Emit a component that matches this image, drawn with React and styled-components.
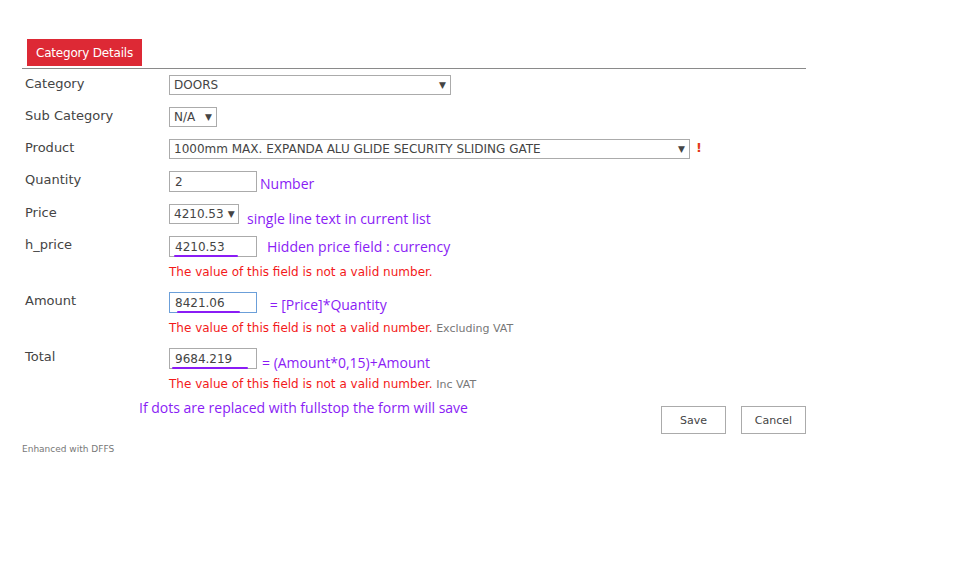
import styled, { createGlobalStyle } from "styled-components";

const GlobalStyle = createGlobalStyle`
  html, body {
    margin: 0;
    padding: 0;
    background: #fff;
  }
  body {
    font-family: "DejaVu Sans", "Liberation Sans", sans-serif;
  }
`;

const PURPLE = "#8a1cf5";

const rows = [
  { label: "Category", kind: "select", value: "DOORS", width: 282 },
  { label: "Sub Category", kind: "select", value: "N/A", width: 48 },
  {
    label: "Product",
    kind: "select",
    value: "1000mm MAX. EXPANDA ALU GLIDE SECURITY SLIDING GATE",
    width: 521,
    required: true,
  },
  { label: "Quantity", kind: "input", value: "2", note: "Number", gap: 3, dy: 3 },
  {
    label: "Price",
    kind: "select",
    value: "4210.53",
    width: 70,
    note: "single line text in current list",
    gap: 8,
    dy: 5,
  },
  {
    label: "h_price",
    kind: "input",
    value: "4210.53",
    note: "Hidden price field : currency",
    gap: 10,
    dy: 1,
    mark: { left: 5, width: 64 },
    error: true,
  },
  {
    label: "Amount",
    kind: "input",
    value: "8421.06",
    focused: true,
    note: " = [Price]*Quantity",
    gap: 9,
    dy: 3,
    mark: { left: 8, width: 63 },
    error: true,
    extra: "Excluding VAT",
  },
  {
    label: "Total",
    kind: "input",
    value: "9684.219",
    note: "= (Amount*0,15)+Amount",
    gap: 5,
    dy: 5,
    mark: { left: 3, width: 76 },
    error: true,
    extra: "Inc VAT",
  },
];

export default function App() {
  return (
    <>
      <GlobalStyle />
      <Page>
        <TabBar>
          <Tab>Category Details</Tab>
        </TabBar>
        <Form>
          {rows.map((row) => (
            <Row key={row.label}>
              <Label>{row.label}</Label>
              <Field>
                <Line $h={row.kind === "select" ? 20 : 21}>
                  {row.kind === "select" ? (
                    <SelectBox $width={row.width}>
                      <span>{row.value}</span>
                      <Arrow>▼</Arrow>
                    </SelectBox>
                  ) : (
                    <InputWrap>
                      <TextBox $focused={row.focused}>{row.value}</TextBox>
                      {row.mark && (
                        <Scribble $left={row.mark.left} $width={row.mark.width} />
                      )}
                    </InputWrap>
                  )}
                  {row.required && <Required>!</Required>}
                  {row.note && (
                    <Note $gap={row.gap} $dy={row.dy}>
                      {row.note}
                    </Note>
                  )}
                </Line>
                {row.error && (
                  <ErrorText>
                    The value of this field is not a valid number.
                    {row.extra && <Hint> {row.extra}</Hint>}
                  </ErrorText>
                )}
              </Field>
            </Row>
          ))}
        </Form>
        <Footer>
          <Note $gap={0} $dy={0}>
            If dots are replaced with fullstop the form will save
          </Note>
          <Buttons>
            <Button>Save</Button>
            <Button>Cancel</Button>
          </Buttons>
        </Footer>
        <Credit>Enhanced with DFFS</Credit>
      </Page>
    </>
  );
}

const Page = styled.div`
  width: 784px;
  padding: 39px 0 0 22px;
  color: #444;
  font-size: 13px;
`;

const TabBar = styled.div`
  display: flex;
  padding-left: 5px;
  padding-bottom: 2px;
  border-bottom: 1px solid #8a8a8a;
`;

const Tab = styled.div`
  width: 115px;
  height: 27px;
  background: #dd2935;
  color: #fff;
  font-size: 12px;
  display: flex;
  align-items: center;
  justify-content: center;
  letter-spacing: -0.2px;
`;

const Form = styled.div`
  display: flex;
  flex-direction: column;
`;

const Row = styled.div`
  display: grid;
  grid-template-columns: 147px 1fr;
  align-items: start;
  padding: 6px 0;
`;

const Label = styled.div`
  padding-left: 3px;
  padding-top: 1px;
  font-size: 13px;
  color: #444;
`;

const Field = styled.div`
  display: flex;
  flex-direction: column;
`;

const Line = styled.div`
  display: flex;
  align-items: flex-start;
  height: ${(p) => p.$h}px;
`;

const SelectBox = styled.div`
  box-sizing: border-box;
  width: ${(p) => p.$width}px;
  height: 20px;
  border: 1px solid #ababab;
  background: #fff;
  display: flex;
  align-items: center;
  justify-content: space-between;
  padding: 0 4px;
  font-size: 12px;
  color: #444;
  white-space: nowrap;
`;

const Arrow = styled.span`
  font-size: 9px;
  color: #444;
  margin-left: 4px;
`;

const InputWrap = styled.div`
  position: relative;
`;

const TextBox = styled.div`
  box-sizing: border-box;
  width: 88px;
  height: 21px;
  border: 1px solid ${(p) => (p.$focused ? "#6b9fd9" : "#ababab")};
  background: #fff;
  display: flex;
  align-items: center;
  padding: 0 5px;
  font-size: 12px;
  color: #444;
`;

const Scribble = styled.div`
  position: absolute;
  left: ${(p) => p.$left}px;
  width: ${(p) => p.$width}px;
  bottom: 0;
  height: 2px;
  border-radius: 2px;
  background: ${PURPLE};
`;

const Required = styled.span`
  margin-left: 6px;
  color: #e23b1a;
  font-weight: bold;
  font-size: 13px;
  line-height: 18px;
`;

const Note = styled.span`
  margin-left: ${(p) => p.$gap}px;
  margin-top: ${(p) => p.$dy}px;
  font-family: "Open Sans", "Noto Sans", sans-serif;
  font-size: 14px;
  line-height: 19px;
  color: ${PURPLE};
  white-space: pre;
`;

const ErrorText = styled.div`
  margin-top: 8px;
  line-height: 15px;
  font-size: 12px;
  color: #f31a1a;
`;

const Hint = styled.span`
  font-size: 11px;
  color: #777;
`;

const Footer = styled.div`
  display: flex;
  justify-content: space-between;
  align-items: flex-start;
  padding-left: 117px;
  margin-top: 0;
`;

const Buttons = styled.div`
  display: flex;
  gap: 15px;
  padding-top: 8px;
`;

const Button = styled.button`
  width: 65px;
  height: 28px;
  border: 1px solid #ababab;
  background: #fff;
  color: #444;
  font-family: inherit;
  font-size: 11px;
  cursor: pointer;
`;

const Credit = styled.div`
  margin-top: 10px;
  font-size: 9px;
  color: #777;
`;
